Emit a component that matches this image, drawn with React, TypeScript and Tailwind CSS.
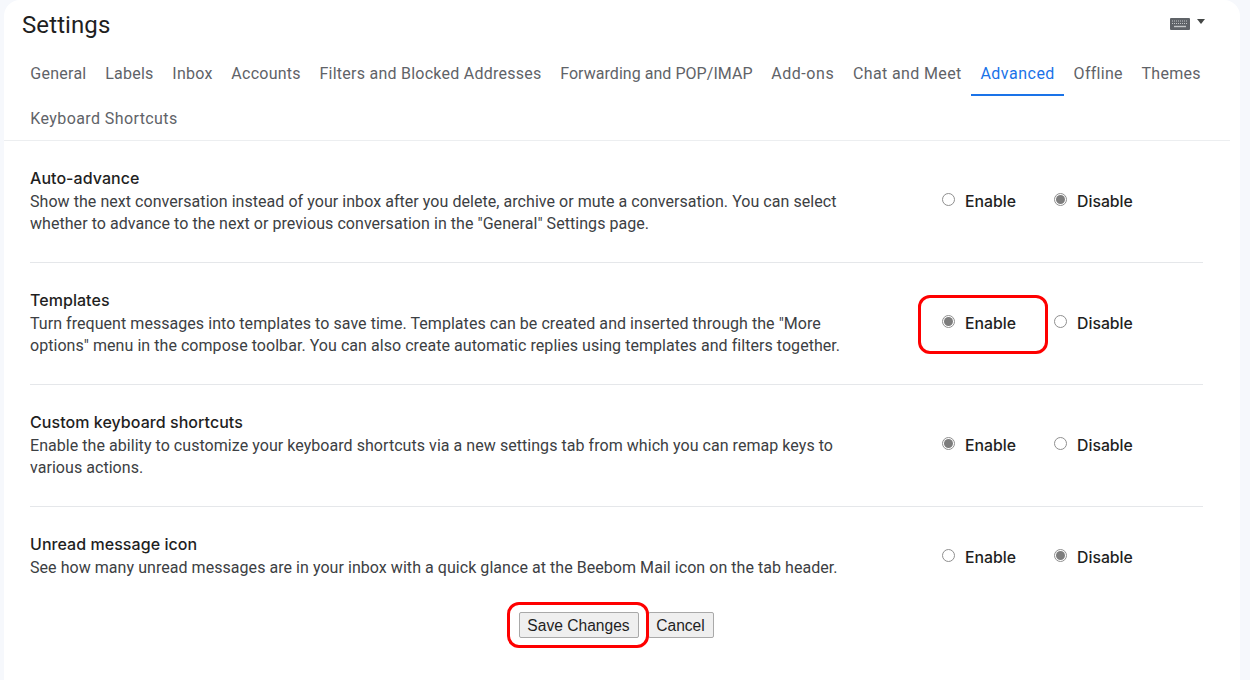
const tabs = [
  { name: "General", tracking: "tracking-[0.25px]" },
  { name: "Labels", tracking: "tracking-[0.25px]" },
  { name: "Inbox", tracking: "tracking-[0.25px]" },
  { name: "Accounts", tracking: "tracking-[0.25px]" },
  { name: "Filters and Blocked Addresses", tracking: "tracking-[0.25px]" },
  { name: "Forwarding and POP/IMAP", tracking: "tracking-[0.04px]" },
  { name: "Add-ons", tracking: "tracking-[0.55px]" },
  { name: "Chat and Meet", tracking: "tracking-[0.38px]" },
  { name: "Advanced", tracking: "tracking-[0.5px]" },
  { name: "Offline", tracking: "tracking-[0.29px]" },
  { name: "Themes", tracking: "tracking-[0.25px]" },
  { name: "Keyboard Shortcuts", tracking: "tracking-[0.4px]" },
]

const rows = [
  {
    title: "Auto-advance",
    lines: [
      "Show the next conversation instead of your inbox after you delete, archive or mute a conversation. You can select",
      'whether to advance to the next or previous conversation in the "General" Settings page.',
    ],
    enabled: false,
  },
  {
    title: "Templates",
    lines: [
      'Turn frequent messages into templates to save time. Templates can be created and inserted through the "More',
      'options" menu in the compose toolbar. You can also create automatic replies using templates and filters together.',
    ],
    enabled: true,
    highlight: true,
  },
  {
    title: "Custom keyboard shortcuts",
    lines: [
      "Enable the ability to customize your keyboard shortcuts via a new settings tab from which you can remap keys to",
      "various actions.",
    ],
    enabled: true,
  },
  {
    title: "Unread message icon",
    lines: ["See how many unread messages are in your inbox with a quick glance at the Beebom Mail icon on the tab header."],
    enabled: false,
    short: true,
  },
]

const Radio = ({ on }: { on: boolean }) => (
  <span className="w-[13px] h-[13px] rounded-full border border-[#8f8f8f] bg-white flex items-center justify-center -mt-[5px] shrink-0">
    {on && <span className="w-[9px] h-[9px] rounded-full bg-[#7d7d7d]" />}
  </span>
)

const KeyboardIcon = () => (
  <svg width="20" height="12" viewBox="0 0 20 12">
    <rect width="20" height="12" rx="1" fill="#5f6368" />
    <path d="M2 3h16M2 5.5h16" stroke="#c4c7c9" strokeWidth="1.2" strokeDasharray="1 1" />
    <path d="M4 8.5h12" stroke="#c4c7c9" strokeWidth="1.4" />
  </svg>
)

export default function App() {
  return (
    <div className="w-[1250px] h-[680px] overflow-hidden bg-[#f6f8fc] pl-1 pr-[10px] font-['Roboto',sans-serif]">
      <div className="relative h-[680px] bg-white rounded-tl-2xl rounded-tr-2xl">
        <div className="flex items-center justify-between pl-[18px] pr-[35px] h-[51px]">
          <h1 className="text-[24px] text-[#1f1f1f] tracking-[0.1px] -mt-0.5">Settings</h1>
          <div className="flex items-start gap-[7px] -mt-1">
            <KeyboardIcon />
            <span className="mt-[1px] w-0 h-0 border-x-[4.5px] border-x-transparent border-t-[5px] border-t-[#444746]" />
          </div>
        </div>

        <div className="flex flex-wrap pl-[17px] pr-4 mr-[10px] h-[90px] border-b border-[#eceef0]">
          {tabs.map((t) => (
            <div
              key={t.name}
              className={`h-[45px] px-[9.35px] flex items-center text-[16px] whitespace-nowrap ${t.tracking} ${
                t.name === "Advanced" ? "text-[#1a73e8] border-b-2 border-[#1a73e8] pt-0.5" : "text-[#5f6368]"
              }`}
            >
              {t.name}
            </div>
          ))}
        </div>

        <div className="pl-[26px] pr-[37px]">
          {rows.map((r, i) => (
            <div
              key={r.title}
              className={`relative flex ${i < 3 ? "h-[122px] border-b border-[#e5e7ea]" : "h-[105px]"} pt-[27px]`}
            >
              <div className="w-[912px] text-[#3c4043] text-[16px] leading-[22.4px] tracking-[0.05px]">
                <div className="text-[#1f1f1f] font-medium font-['Inter',sans-serif] -mt-[1px] mb-[1.5px]">{r.title}</div>
                {r.lines.map((l) => (
                  <div key={l} className="whitespace-nowrap">{l}</div>
                ))}
              </div>
              <div className={`flex items-start ${r.short ? "pt-[13px]" : "pt-[23px]"} font-['Inter',sans-serif] text-[15.8px] font-medium text-[#1f1f1f] leading-[22px]`}>
                <label className="w-[112px] flex items-center gap-[10px]">
                  <Radio on={r.enabled} />
                  Enable
                </label>
                <label className="flex items-center gap-[10px]">
                  <Radio on={!r.enabled} />
                  Disable
                </label>
              </div>
              {r.highlight && (
                <div className="absolute left-[888px] top-[32px] w-[130px] h-[59px] rounded-xl border-[3px] border-[#fe0000]" />
              )}
            </div>
          ))}
        </div>

        <div className="relative flex justify-center gap-[9px] pr-[12px] font-['Liberation_Sans',sans-serif]">
          <button className="h-[26px] w-[120px] pt-[1px] bg-[#efefef] border border-[#a9a9a9] rounded-[2px] text-[15.6px] text-[#1f1f1f]">Save Changes</button>
          <button className="h-[26px] w-[66px] pt-[1px] bg-[#efefef] border border-[#a9a9a9] rounded-[2px] text-[15.6px] text-[#1f1f1f]">Cancel</button>
          <div className="absolute left-[503px] -top-[10px] w-[142px] h-[46px] rounded-xl border-[3px] border-[#fe0000]" />
        </div>
      </div>
    </div>
  )
}
